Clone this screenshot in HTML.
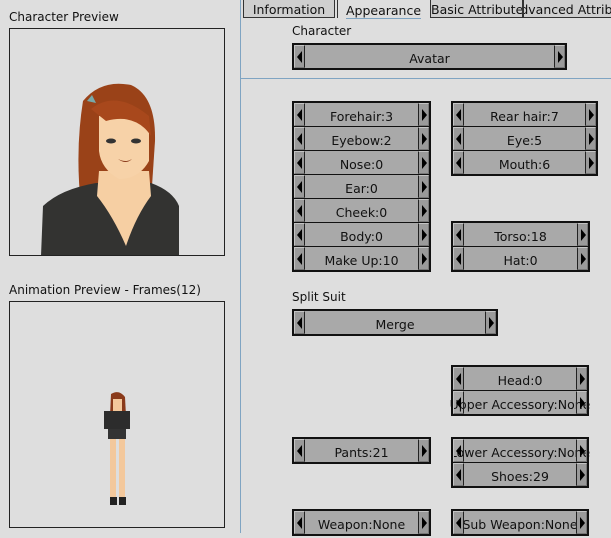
<!DOCTYPE html>
<html><head><style>
*{margin:0;padding:0;box-sizing:border-box}
body{width:611px;height:533px;background:#dedede;font-family:"DejaVu Sans","Liberation Sans",sans-serif;font-size:12px;color:#111;position:relative;overflow:hidden}
.abs{position:absolute}
.lbl{position:absolute;font-size:12px}
.box{position:absolute;border:1px solid #222;background:#dedede}
.grp{position:absolute;border:2px solid #111;background:#111;display:flex;flex-direction:column;gap:1px}
.row{height:23px;position:relative;background:#a9a9a9}
.ar{position:absolute;top:0;width:11px;height:23px;background:#9a9a9a;border:1px solid #c4c4c4;border-right-color:#777;border-bottom-color:#777;z-index:2}
.ar.l{left:0;border-right:1px solid #222}
.ar.r{right:0;border-left:1px solid #222}
.ar.l::after{content:"";position:absolute;left:2px;top:5px;border-right:5px solid #000;border-top:6px solid transparent;border-bottom:6px solid transparent}
.ar.r::after{content:"";position:absolute;left:3px;top:5px;border-left:5px solid #000;border-top:6px solid transparent;border-bottom:6px solid transparent}
.mid{position:absolute;left:0;right:0;top:0;text-align:center;line-height:27px;font-size:12.5px;white-space:nowrap;display:flex;justify-content:center}
.tab{position:absolute;top:-2px;height:20px;border:1px solid #333;background:#cfcfcf;font-size:12.5px;line-height:21px;text-align:center;white-space:nowrap;overflow:hidden}
</style></head><body>
<div class="lbl" style="left:9px;top:10px">Character Preview</div>
<div class="box" style="left:9px;top:28px;width:216px;height:228px;overflow:hidden">
<svg width="216" height="228" viewBox="9 28 216 228">
<path d="M82 100 Q100 78 130 84 Q155 95 154 140 L150 200 L80 205 Q74 150 82 100Z" fill="#9a4218"/>
<path d="M40 255 L42 205 Q60 188 95 182 L150 182 Q172 190 178 205 L178 255Z" fill="#333331"/>
<path d="M98 170 L148 170 L150 195 Q135 215 125 245 Q112 215 96 195Z" fill="#f6cfa3"/>
<path d="M98 115 Q118 108 148 118 L148 160 Q138 178 118 178 Q100 168 98 150Z" fill="#f7d2a8"/>
<path d="M90 108 Q115 88 148 115 L150 135 Q135 112 105 120Z" fill="#a8481c"/>
<ellipse cx="110" cy="140" rx="5" ry="2.5" fill="#333"/><ellipse cx="135" cy="140" rx="5" ry="2.5" fill="#333"/>
<path d="M117 158 Q125 162 131 158 Q125 164 117 158Z" fill="#8a3a1a"/>
<path d="M86 100 l5-6 l4 8z" fill="#7aa"/>
</svg></div>
<div class="lbl" style="left:9px;top:283px">Animation Preview - Frames(12)</div>
<div class="box" style="left:9px;top:301px;width:216px;height:227px;overflow:hidden">
<svg width="216" height="227" viewBox="9 301 216 227">
<path d="M110 393 Q118 388 124 396 L125 415 L109 415Z" fill="#8a3a1a"/>
<rect x="112" y="398" width="9" height="12" fill="#f3c89c"/>
<rect x="103" y="410" width="26" height="18" fill="#2c2c2c"/>
<rect x="107" y="428" width="18" height="10" fill="#333"/>
<rect x="109" y="438" width="6" height="58" fill="#f3c89c"/><rect x="118" y="438" width="6" height="58" fill="#f3c89c"/>
<rect x="109" y="496" width="7" height="8" fill="#222"/><rect x="118" y="496" width="7" height="8" fill="#222"/>
</svg></div>
<div class="abs" style="left:240px;top:0;width:1px;height:533px;background:#7fa4c2"></div>
<div class="abs" style="left:241px;top:78px;width:370px;height:1px;background:#7fa4c2"></div>
<div class="tab" style="left:243px;width:92px">Information</div>
<div class="abs" style="left:337px;top:0;width:92px;height:18px;background:#dedede;border-left:1px solid #333;text-align:center;font-size:12.5px;line-height:21px"><span style="border-bottom:1px solid #7fa4c2">Appearance</span></div>
<div class="tab" style="left:430px;width:93px">Basic Attributes</div>
<div class="tab" style="left:523px;width:92px;text-align:left"><span style="margin-left:-12px">Advanced Attributes</span></div>
<div class="lbl" style="left:292px;top:24px">Character</div>
<div class="grp" style="left:292px;top:43px;width:275px"><div class="row"><div class="ar l"></div><div class="mid">Avatar</div><div class="ar r"></div></div></div>
<div class="grp" style="left:292px;top:101px;width:139px">
<div class="row"><div class="ar l"></div><div class="mid">Forehair:3</div><div class="ar r"></div></div>
<div class="row"><div class="ar l"></div><div class="mid">Eyebow:2</div><div class="ar r"></div></div>
<div class="row"><div class="ar l"></div><div class="mid">Nose:0</div><div class="ar r"></div></div>
<div class="row"><div class="ar l"></div><div class="mid">Ear:0</div><div class="ar r"></div></div>
<div class="row"><div class="ar l"></div><div class="mid">Cheek:0</div><div class="ar r"></div></div>
<div class="row"><div class="ar l"></div><div class="mid">Body:0</div><div class="ar r"></div></div>
<div class="row"><div class="ar l"></div><div class="mid">Make Up:10</div><div class="ar r"></div></div>
</div>
<div class="grp" style="left:451px;top:101px;width:147px">
<div class="row"><div class="ar l"></div><div class="mid">Rear hair:7</div><div class="ar r"></div></div>
<div class="row"><div class="ar l"></div><div class="mid">Eye:5</div><div class="ar r"></div></div>
<div class="row"><div class="ar l"></div><div class="mid">Mouth:6</div><div class="ar r"></div></div>
</div>
<div class="grp" style="left:451px;top:221px;width:139px">
<div class="row"><div class="ar l"></div><div class="mid">Torso:18</div><div class="ar r"></div></div>
<div class="row"><div class="ar l"></div><div class="mid">Hat:0</div><div class="ar r"></div></div>
</div>
<div class="lbl" style="left:292px;top:290px">Split Suit</div>
<div class="grp" style="left:292px;top:309px;width:206px"><div class="row"><div class="ar l"></div><div class="mid">Merge</div><div class="ar r"></div></div></div>
<div class="grp" style="left:451px;top:365px;width:138px">
<div class="row"><div class="ar l"></div><div class="mid">Head:0</div><div class="ar r"></div></div>
<div class="row"><div class="mid">Upper Accessory:None</div><div class="ar l" style="background:transparent"></div><div class="ar r" style="background:transparent"></div></div>
</div>
<div class="grp" style="left:292px;top:437px;width:139px"><div class="row"><div class="ar l"></div><div class="mid">Pants:21</div><div class="ar r"></div></div></div>
<div class="grp" style="left:451px;top:437px;width:138px">
<div class="row"><div class="mid">Lower Accessory:None</div><div class="ar l" style="background:transparent"></div><div class="ar r" style="background:transparent"></div></div>
<div class="row"><div class="ar l"></div><div class="mid">Shoes:29</div><div class="ar r"></div></div>
</div>
<div class="grp" style="left:292px;top:509px;width:139px"><div class="row"><div class="ar l"></div><div class="mid">Weapon:None</div><div class="ar r"></div></div></div>
<div class="grp" style="left:451px;top:509px;width:138px"><div class="row"><div class="ar l"></div><div class="mid">Sub Weapon:None</div><div class="ar r"></div></div></div>
</body></html>
